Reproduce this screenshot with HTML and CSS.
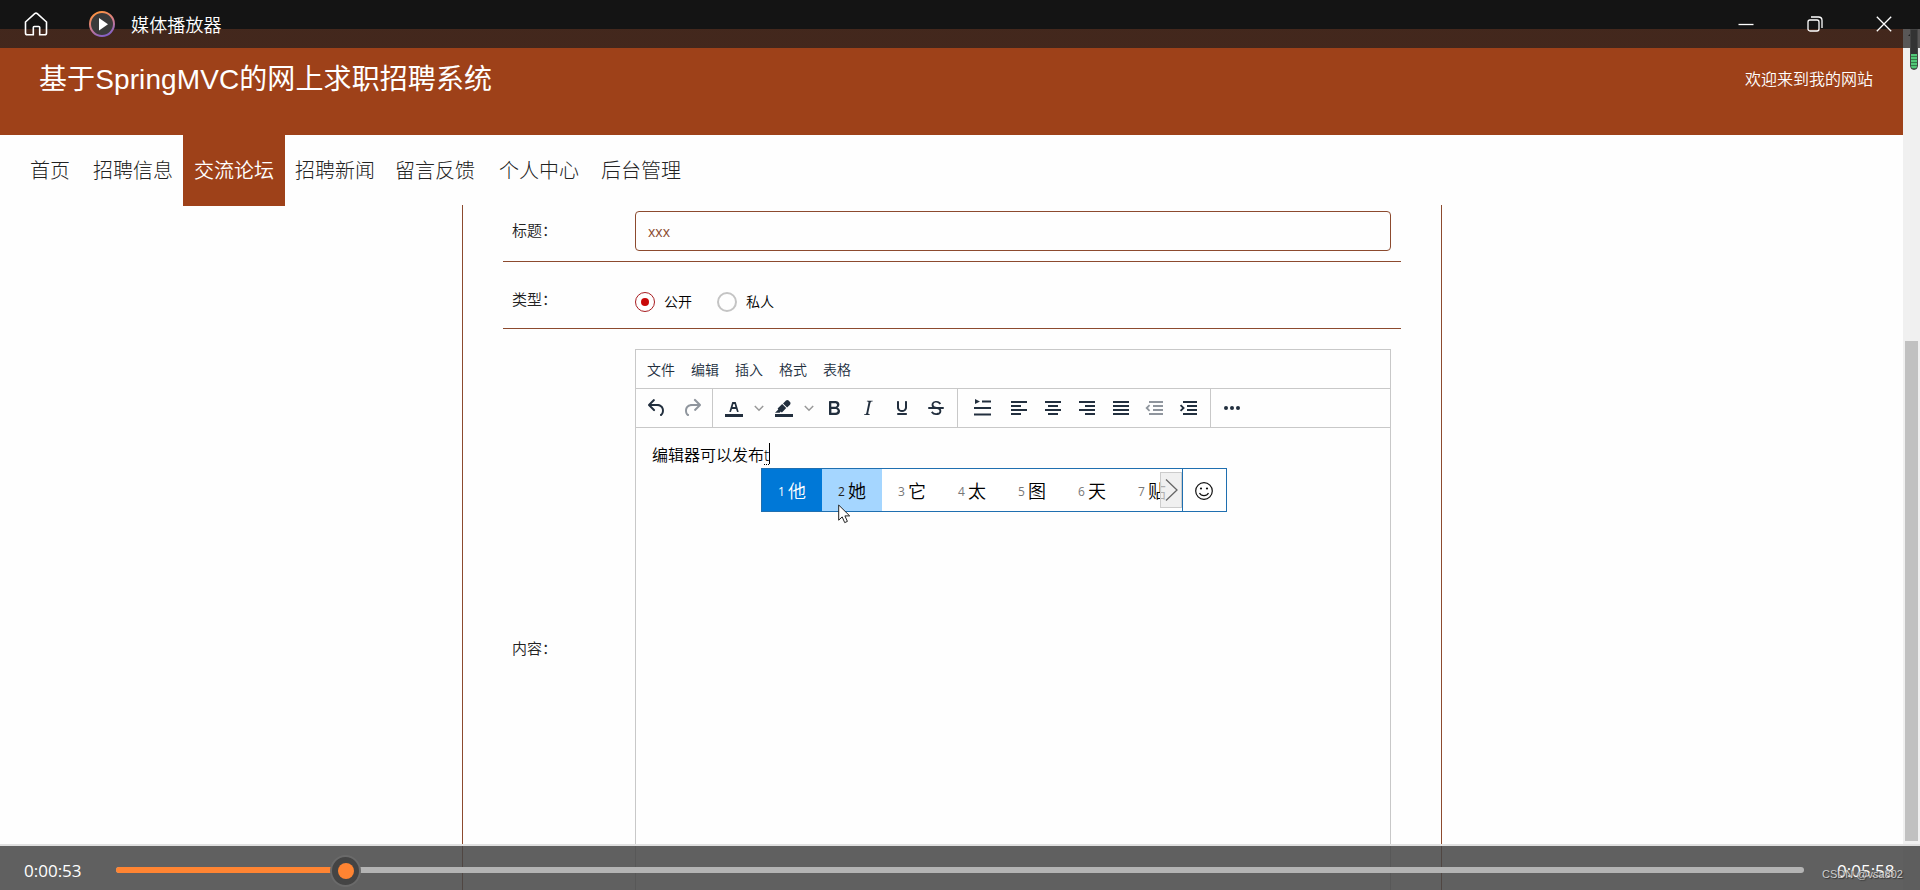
FILE: index.html
```html
<!DOCTYPE html>
<html lang="zh-CN">
<head>
<meta charset="utf-8">
<title>媒体播放器</title>
<link rel="stylesheet" href="styles.css">
</head>
<body>
<div class="screen">
  <main class="page">
    <div class="site">
      <header class="site-header">
        <h1 class="site-title">基于SpringMVC的网上求职招聘系统</h1>
        <span class="welcome">欢迎来到我的网站</span>
      </header>
      <nav class="nav">
        <a class="n1">首页</a><a class="n2">招聘信息</a><a class="active">交流论坛</a><a class="n4">招聘新闻</a><a>留言反馈</a><a class="n6">个人中心</a><a class="n7">后台管理</a>
      </nav>
      <section class="panel">
        <div class="row row-title">
          <label class="label">标题：</label>
          <div class="input">xxx</div>
        </div>
        <div class="row row-type">
          <label class="label">类型：</label>
          <div class="radios">
            <span class="radio on"><i></i></span><span class="rtext">公开</span>
            <span class="radio"></span><span class="rtext">私人</span>
          </div>
        </div>
        <div class="row row-content">
          <label class="label label-content">内容：</label>
          <div class="editor">
            <div class="menubar"><span>文件</span><span>编辑</span><span>插入</span><span>格式</span><span>表格</span></div>
            <div class="toolbar">
              <div class="group g1">
                <svg viewBox="0 0 24 24"><path d="M6.4 8H12c3.7 0 6.2 2 6.8 5.1.6 2.7-.4 5.6-2.3 6.8a1 1 0 0 1-1-1.8c1.1-.6 1.8-2.7 1.4-4.6-.5-2.1-2.1-3.5-4.9-3.5H6.4l3.3 3.3a1 1 0 1 1-1.4 1.4l-5-5a1 1 0 0 1 0-1.4l5-5a1 1 0 0 1 1.4 1.4L6.4 8z"/></svg>
                <svg class="off" viewBox="0 0 24 24"><path d="M17.6 10H12c-2.8 0-4.4 1.4-4.9 3.5-.4 2 .3 4 1.4 4.6a1 1 0 1 1-1 1.8c-2-1.2-2.9-4.1-2.3-6.8.6-3 3-5.1 6.8-5.1h5.6l-3.3-3.3a1 1 0 1 1 1.4-1.4l5 5a1 1 0 0 1 0 1.4l-5 5a1 1 0 0 1-1.4-1.4l3.3-3.3z"/></svg>
              </div>
              <div class="group g2">
                <svg viewBox="0 0 24 24"><path d="M3 18h18v3H3zM8.700 16h-.8a.5.5 0 0 1-.5-.6l2.700-9c.1-.3.3-.4.5-.4h2.800c.2 0 .4.1.5.4l2.700 9a.5.5 0 0 1-.5.6h-.8a.5.5 0 0 1-.4-.4l-.7-2.200c0-.3-.3-.4-.5-.4h-3.400c-.2 0-.4.1-.5.4l-.7 2.200c0 .3-.2.4-.4.4zm2.600-7.600-.6 2a.5.5 0 0 0 .5.6h1.600a.5.5 0 0 0 .5-.6l-.6-2c0-.3-.3-.4-.5-.4h-.4c-.2 0-.4.1-.5.4z"/></svg>
                <svg class="chev" viewBox="0 0 10 10"><path d="M.8 3l4.2 4.2L9.2 3"/></svg>
                <svg class="pen" viewBox="0 0 24 24"><path d="M3 18h18v3H3zM7.700 16.700H3l3.300-3.300-.7-.8L10.200 8l4 4.100-4 4.200c-.2.2-.6.2-.8 0l-.6-.7-1.100 1.100zm3.300-9.300l3-2.900a2 2 0 0 1 2.600 0L18 6c.7.7.7 2 0 2.700l-2.900 2.900z"/></svg>
                <svg class="chev" viewBox="0 0 10 10"><path d="M.8 3l4.2 4.2L9.2 3"/></svg>
                <svg class="bold" viewBox="0 0 24 24"><path d="M7.8 19c-.3 0-.5 0-.6-.2l-.2-.5V5.7c0-.2 0-.4.2-.5l.6-.2h5c1.5 0 2.7.3 3.5 1 .7.6 1.1 1.4 1.1 2.5a3 3 0 0 1-.6 1.900c-.4.6-1 1-1.600 1.200.4.1.9.3 1.300.6s.8.7 1 1.200c.4.4.5 1 .5 1.600 0 1.300-.4 2.300-1.300 3-.8.7-2.100 1-3.800 1H7.800zm5-8.300c.6 0 1.200-.1 1.600-.5.4-.3.6-.7.6-1.300 0-1.100-.8-1.700-2.300-1.700H9.300v3.500h3.400zm.5 6c.7 0 1.300-.1 1.700-.4.4-.4.6-.9.6-1.500s-.2-1-.7-1.400c-.4-.3-1-.4-2-.4H9.400v3.800h4z"/></svg>
                <svg viewBox="0 0 24 24"><path d="M16.700 4.700l-.1.9h-.3c-.6 0-1 0-1.400.3-.3.3-.4.6-.5 1.100l-2.100 9.800v.6c0 .5.4.8 1.400.8h.2l-.2.8H8l.2-.8h.2c1.100 0 1.800-.5 2-1.500l2-9.800.1-.5c0-.6-.4-.8-1.400-.8h-.3l.2-.9h5.800z"/></svg>
                <svg viewBox="0 0 24 24"><path d="M16 5c.6 0 1 .4 1 1v5.500a4 4 0 0 1-.4 1.800 5 5 0 0 1-1.100 1.400 5.600 5.600 0 0 1-7 0 5 5 0 0 1-1.100-1.400A4 4 0 0 1 7 11.500V6c0-.6.4-1 1-1s1 .4 1 1v5.500a2.600 2.600 0 0 0 .9 1.900A3 3 0 0 0 12 14a3 3 0 0 0 2.100-.6 2.600 2.600 0 0 0 .9-1.900V6c0-.6.4-1 1-1zM8 17h8c.6 0 1 .4 1 1s-.4 1-1 1H8a1 1 0 0 1 0-2z"/></svg>
                <svg viewBox="0 0 24 24"><path d="M15.600 8.500c-.5-.7-1-1.100-1.300-1.300-.6-.4-1.300-.6-2-.6-2.700 0-2.800 1.700-2.800 2.100 0 1.600 1.800 2 3.200 2.300 4.400.9 4.600 2.800 4.600 3.900 0 1.400-.7 4.100-5 4.100A6.200 6.200 0 0 1 7 16.400l1.500-1.100c.4.6 1.600 2 3.700 2 1.600 0 2.500-.4 3-1.200.4-.8.3-2-.8-2.600-.7-.4-1.600-.7-2.900-1-1-.2-3.900-.8-3.900-3.600C7.600 6 10.300 5 12.400 5c2.900 0 4.200 1.600 4.700 2.400l-1.500 1.100zM5 11h14a1 1 0 0 1 0 2H5a1 1 0 0 1 0-2z"/></svg>
              </div>
              <div class="group g3">
                <svg viewBox="0 0 24 24"><path d="M12 4.500h9v2h-9zM4 11h17v2H4zM4 17.500h17v2H4zM5 3l5 2.500L5 8z"/></svg>
                <svg viewBox="0 0 24 24"><path d="M4 5h16v2H4zM4 9h10v2H4zM4 13h16v2H4zM4 17h10v2H4z"/></svg>
                <svg viewBox="0 0 24 24"><path d="M4 5h16v2H4zM7 9h10v2H7zM4 13h16v2H4zM7 17h10v2H7z"/></svg>
                <svg viewBox="0 0 24 24"><path d="M4 5h16v2H4zM10 9h10v2H10zM4 13h16v2H4zM10 17h10v2H10z"/></svg>
                <svg viewBox="0 0 24 24"><path d="M4 5h16v2H4zM4 9h16v2H4zM4 13h16v2H4zM4 17h16v2H4z"/></svg>
                <svg class="off" viewBox="0 0 24 24"><path d="M6 5h14v2H6zM10 9h10v2H10zM10 13h10v2H10zM6 17h14v2H6zM7.200 9.800L5 12l2.200 2.200L6 15.600 2.400 12 6 8.400z"/></svg>
                <svg viewBox="0 0 24 24"><path d="M6 5h14v2H6zM10 9h10v2H10zM10 13h10v2H10zM6 17h14v2H6zM4.200 8.400L7.900 12l-3.700 3.600-1.300-1.300L5.200 12 2.900 9.700z"/></svg>
              </div>
              <div class="group g4">
                <svg viewBox="0 0 24 24"><circle cx="6" cy="12" r="2"/><circle cx="12" cy="12" r="2"/><circle cx="18" cy="12" r="2"/></svg>
              </div>
            </div>
            <div class="doc">编辑器可以发布<span class="composing">t</span><span class="caret"></span></div>
          </div>
        </div>
      </section>
    </div>
    <aside class="scrollbar"><div class="thumb"></div></aside>
  </main>

  <div class="ime">
    <div class="cands">
      <span class="cand sel"><small>1</small>他</span>
      <span class="cand hover"><small>2</small>她</span>
      <span class="cand"><small>3</small>它</span>
      <span class="cand"><small>4</small>太</span>
      <span class="cand"><small>5</small>图</span>
      <span class="cand"><small>6</small>天</span>
      <span class="cand"><small>7</small>贴</span>
      <span class="next"><svg viewBox="0 0 20 34"><path d="M5 6.500l11 10.500L5 27.500"/></svg></span>
    </div>
    <div class="emoji"><svg viewBox="0 0 20 20"><circle cx="10" cy="10" r="8.300"/><path d="M5.500 12c1.800 3.500 7.200 3.500 9 0"/><circle class="eye" cx="7" cy="7.500" r="1.100"/><circle class="eye" cx="13" cy="7.500" r="1.100"/></svg></div>
  </div>
  <svg class="cursor" viewBox="0 0 13 20"><path d="M.7 1v15.200l3.500-3.300 2.500 5.700 2.700-1.200-2.500-5.500h4.800z"/></svg>

  <div class="titlebar">
    <svg class="home" viewBox="0 0 24 24"><path d="M1.500 10L10.700 1.700q1.300-1.100 2.600 0L22.500 10V21q0 1.800-1.800 1.800H15.700V15.500q0-1-1-1H10.300q-1 0-1 1v7.300H3.300q-1.800 0-1.800-1.800z"/></svg>
    <svg class="logo" viewBox="0 0 26 26"><defs><linearGradient id="ring" x1=".3" y1="0" x2=".7" y2="1"><stop offset="0" stop-color="#ff9340"/><stop offset=".5" stop-color="#d27d8e"/><stop offset="1" stop-color="#7f5fc8"/></linearGradient></defs><circle cx="13" cy="13" r="12" fill="#3a3a3a" stroke="url(#ring)" stroke-width="2"/><path d="M10 7v12.500l9-6.300z" fill="#fff"/></svg>
    <span class="app-name">媒体播放器</span>
    <div class="win">
      <svg viewBox="0 0 16 16"><path d="M.5 8.500h15"/></svg>
      <svg viewBox="0 0 16 16"><rect x="1" y="4" width="11" height="11" rx="2"/><path d="M4 1h7.500q3.500 0 3.500 3.500V12"/></svg>
      <svg viewBox="0 0 16 16"><path d="M.8.800l14.400 14.400M15.200.800L.8 15.200"/></svg>
    </div>
  </div>
  <div class="scroll-up"></div>
  <div class="meter"></div>

  <footer class="player">
    <span class="time">0:00:53</span>
    <div class="track"><div class="played" style="width:13.6%"></div><span class="knob"><i></i></span></div>
    <span class="time total">0:05:58</span>
    <span class="mark">CSDN @vsa802</span>
  </footer>
</div>
</body>
</html>
```
FILE: styles.css
```css
* { box-sizing: border-box; }
body { margin: 0; font-family: "Open Sans", "Noto Sans CJK SC", sans-serif; }
.screen { position: relative; width: 1920px; height: 890px; overflow: hidden; background: #fff; }
svg { display: block; flex: none; }

/* site page, shown beneath the player chrome */
.page { display: flex; height: 890px; padding-top: 29px; }
.site { width: 1903px; background: #fefefe; }
.site-header { display: flex; justify-content: space-between; height: 106px; padding: 31px 30px 0 39px; background: #9e4119; color: #fff; }
.site-title { margin: 0; font: 400 28px/40px "Liberation Sans", "Noto Sans CJK SC", sans-serif; letter-spacing: .1px; white-space: nowrap; }
.welcome { margin-top: -2px; font: 350 16px/40px "Noto Sans CJK SC", sans-serif; color: #fff; }
.nav { display: flex; height: 71px; padding-left: 20px; font: 300 20px/70px "Noto Sans CJK SC", sans-serif; color: #222; }
.nav a { width: 102px; padding-left: 10px; white-space: nowrap; }
.nav .n1 { width: 63px; }
.nav .n2 { width: 100px; }
.nav .n4 { width: 100px; }
.nav .active { width: 102px; padding-left: 11px; color: #fff; background: #9e4119; font-weight: 350; }
.nav .n6 { width: 103px; padding-left: 12px; }
.nav .n7 { padding-left: 11px; }

.panel { width: 980px; height: 686px; margin: -1px 0 0 462px; padding: 0 40px; border: solid #8c4a2e; border-width: 0 1px; }
.row { display: flex; width: 898px; border-bottom: 1px solid #8c4a2e; padding-left: 9px; }
.label { width: 123px; flex: none; font: 350 15px/24px "Noto Sans CJK SC", sans-serif; color: #222; }
.row-title { height: 57px; padding-top: 6px; }
.row-title .label { padding-top: 7px; }
.input { width: 756px; height: 40px; padding-left: 12px; border: 1px solid #8c4a2e; border-radius: 4px; font-size: 14px; line-height: 40px; color: #8c4a2e; }
.row-type { height: 67px; padding-top: 25px; }
.radios { display: flex; align-items: center; height: 30px; }
.radio { display: flex; align-items: center; justify-content: center; width: 20px; height: 20px; border: 2px solid #c4c4c4; border-radius: 50%; }
.radio.on { border: 1.500px solid #a81c20; }
.radio i { width: 8px; height: 8px; border-radius: 50%; background: #c80808; }
.rtext { width: 52px; padding-left: 9px; margin: -2px 10px 0 0; font: 350 14px/20px "Noto Sans CJK SC", sans-serif; color: #000; }
.row-content { border: 0; padding-top: 20px; }
.label-content { padding-top: 287px; }

.editor { width: 756px; height: 560px; border: 1px solid #c8c8c8; border-bottom: 0; }
.menubar { display: flex; gap: 16px; height: 39px; padding-left: 11px; border-bottom: 1px solid #c8c8c8; font: 350 14px/38px "Noto Sans CJK SC", sans-serif; color: #222f3e; }
.toolbar { display: flex; height: 39px; border-bottom: 1px solid #c8c8c8; fill: #222f3e; }
.group { display: flex; align-items: center; border-right: 1px solid #c8c8c8; }
.group svg { width: 24px; height: 24px; }
.group .off { opacity: .5; }
.g1 { width: 77px; padding-left: 9px; gap: 11px; }
.g2 { width: 245px; padding-left: 9px; gap: 10px; }
.g2 .chev { width: 10px; height: 10px; margin: 0 -1px 0 -2px; fill: none; stroke: #999; stroke-width: 1.500; }
.g2 .pen { margin-left: -1px; }
.g2 .bold { margin-left: -1px; }
.g3 { width: 253px; padding-left: 12px; gap: 10px; }
.g3 svg:first-child { margin-right: 3px; }
.g4 { border: 0; padding-left: 9px; }
.doc { display: flex; padding: 15px 0 0 16px; font: 350 16px/24px "Open Sans", "Noto Sans CJK SC", sans-serif; color: #000; }
.composing { width: 5px; height: 22px; border-bottom: 1px dotted #000; }
.caret { width: 1px; height: 21px; background: #000; }

.scrollbar { width: 17px; padding: 312px 2px 0; background: #f0f0f0; }
.thumb { height: 500px; background: #c1c1c1; }

/* input method candidate window */
.ime { position: absolute; left: 761px; top: 468px; display: flex; width: 466px; height: 44px; border: 1px solid #1f6fb0; background: #fff; }
.cands { position: relative; display: flex; width: 421px; border-right: 1px solid #1f6fb0; overflow: hidden; }
.cand { display: flex; align-items: center; flex: none; width: 60px; padding-left: 16px; gap: 3px; font: 350 18px/42px "Noto Sans CJK SC", sans-serif; color: #000; }
.cand small { width: 7px; padding-top: 3px; font: 400 12px/20px "Open Sans", sans-serif; color: #777; }
.sel { background: #0078d7; color: #fff; }
.sel small { color: #fff; }
.hover { background: #a5d6ff; }
.hover small { color: #222; }
.next { position: absolute; right: 0; top: 3px; width: 22px; height: 36px; border: 1px solid #ccc; background: rgba(235,235,235,.75); }
.next svg { width: 20px; height: 34px; fill: none; stroke: #666; stroke-width: 1.300; }
.emoji { padding: 12px 0 0 11px; }
.emoji svg { width: 20px; height: 20px; fill: none; stroke: #111; stroke-width: 1.200; }
.emoji .eye { fill: #111; stroke: none; }
.cursor { position: absolute; left: 838px; top: 504px; width: 13px; height: 20px; fill: #fff; stroke: #222; stroke-width: 1; }

/* translucent window chrome */
.titlebar { position: absolute; left: 0; top: 0; display: flex; align-items: center; width: 1920px; height: 48px; padding: 0 21px 0 24px; background: linear-gradient(#141414 29px, rgba(33,30,30,.73) 29px); }
.home { width: 24px; height: 24px; fill: none; stroke: #fff; stroke-width: 1.600; }
.logo { width: 26px; height: 26px; margin-left: 41px; }
.app-name { margin-left: 16px; font: 350 18px/40px "Noto Sans CJK SC", sans-serif; letter-spacing: .15px; color: #fff; }
.win { display: flex; gap: 53px; margin: -1px 0 0 auto; padding-right: 7px; }
.win svg { width: 16px; height: 16px; fill: none; stroke: #fff; stroke-width: 1.300; }
.scroll-up { position: absolute; left: 1908px; top: 32px; border: 4px solid transparent; border-top: 0; border-bottom-color: #222; }
.meter { position: absolute; left: 1910px; top: 29px; width: 8px; height: 41px; border: 1px solid #444; border-radius: 0 0 4px 4px; background: linear-gradient(#333 24px, transparent 24px), repeating-linear-gradient(#52c878 0 2px, #347c49 2px 3px); }

.player { position: absolute; left: 0; top: 844px; display: flex; align-items: center; width: 1920px; height: 46px; padding: 4px 0 0 24px; border-top: 2px solid #e0e0e0; background: rgba(70,70,70,.86); background-clip: padding-box; color: #fff; }
.time { flex: none; width: 92px; padding-top: 1px; font: 400 17px/24px "Open Sans", sans-serif; }
.track { position: relative; flex: none; width: 1688px; height: 6px; border-radius: 3px; background: #b4b4b4; }
.played { height: 6px; border-radius: 3px; background: #ff8432; }
.knob { position: absolute; left: 214px; top: -12px; display: flex; align-items: center; justify-content: center; width: 31px; height: 32px; border: 2px solid #6a6a6a; border-radius: 50%; background: #444; }
.knob i { width: 16px; height: 16px; border-radius: 50%; background: #ff8432; }
.total { width: 60px; margin-left: 33px; }
.mark { position: absolute; left: 1822px; top: 20px; font: 11px/16px "Liberation Sans", sans-serif; color: #ccc; text-shadow: 1px 1px 1px #333; white-space: nowrap; }
```
